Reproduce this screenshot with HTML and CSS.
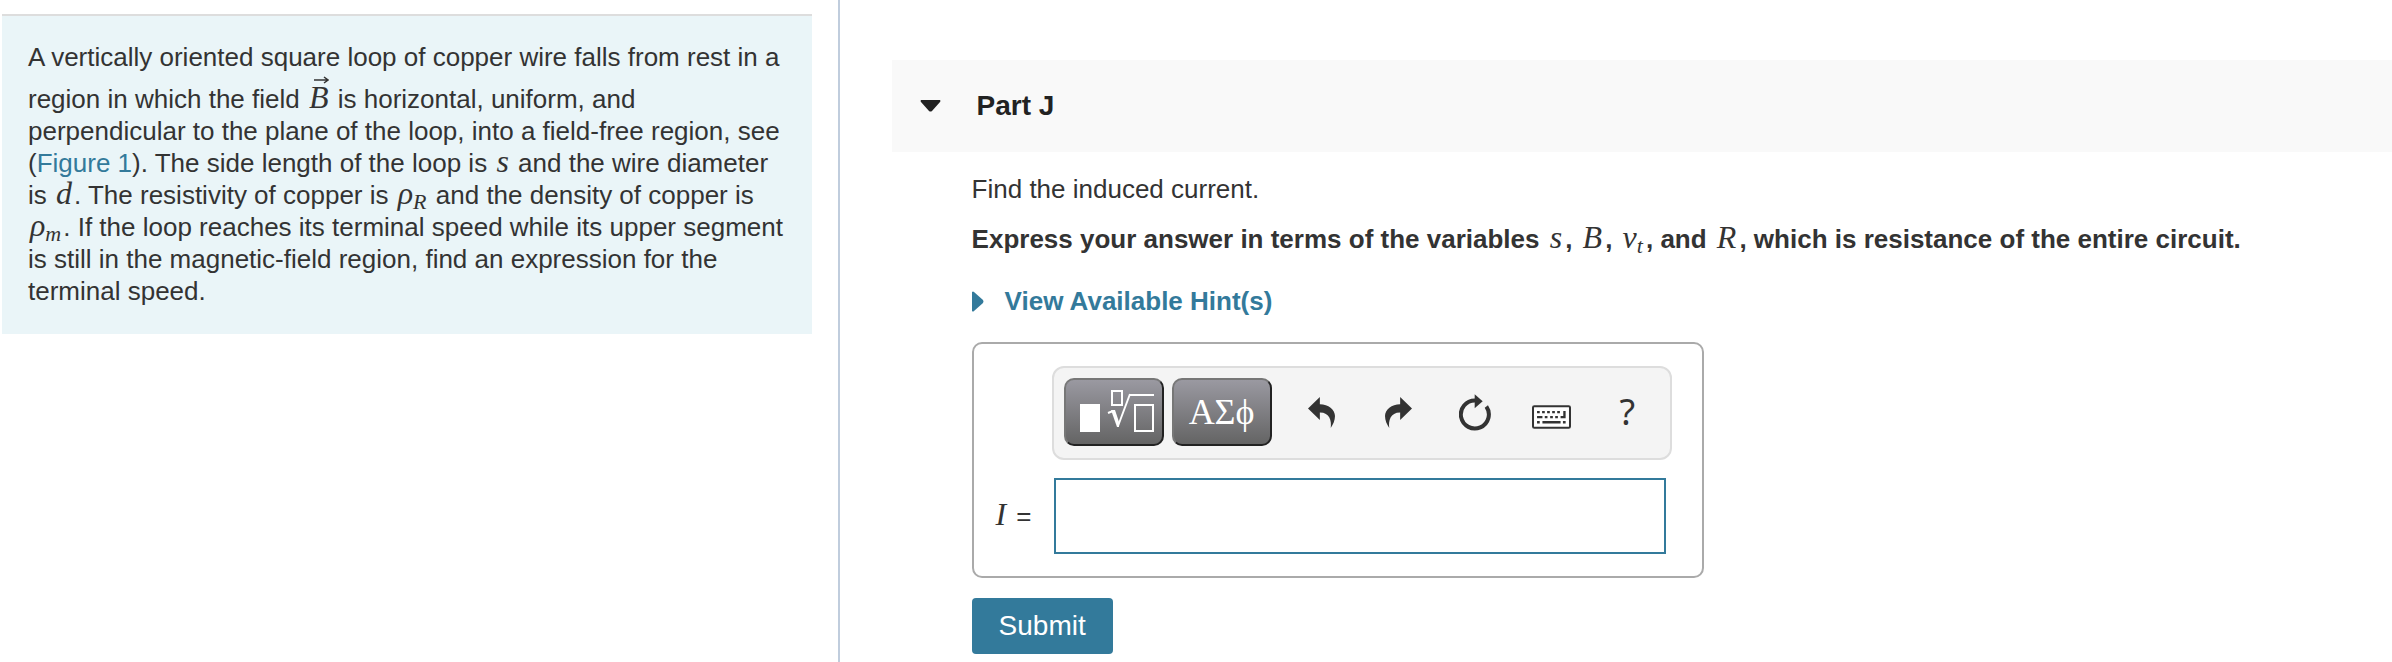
FILE: index.html
```html
<!DOCTYPE html>
<html lang="en">
<head>
    <meta charset="UTF-8">
    <meta name="viewport" content="width=device-width, initial-scale=1.0">
    <title>Part J</title>
    <link rel="stylesheet" href="styles.css">
</head>
<body>

<div class="layout">
    <!-- Problem statement -->
    <aside class="intro-pane">
        <div class="intro">
            A vertically oriented square loop of copper wire falls from rest in a region in which the field
            <span class="math vector">B<svg class="vector-arrow" viewBox="0 0 15 8" width="15" height="8" aria-hidden="true"><path d="M0 4H14M10 1L14 4L10 7" fill="none" stroke="currentColor" stroke-width="1.5"/></svg></span>
            is horizontal, uniform, and perpendicular to the plane of the loop, into a field-free region, see
            (<a href="#figure1">Figure 1</a>). The side length of the loop is <span class="math">s</span>
            and the wire diameter is <span class="math">d</span>. The resistivity of copper is
            <span class="math">ρ<sub>R</sub></span> and the density of copper is
            <span class="math">ρ<sub>m</sub></span>. If the loop reaches its terminal speed while its upper segment
            is still in the magnetic-field region, find an expression for the terminal speed.
        </div>
    </aside>

    <!-- Question part -->
    <main class="part-pane">
        <h2 class="part-header">
            <button type="button" class="part-toggle" aria-expanded="true">
                <svg viewBox="0 0 21 12" width="21" height="12" aria-hidden="true"><path d="M1 0H20Q21 1 20 2L12 11Q10.500 12 9 11L1 2Q0 1 1 0Z" fill="currentColor"/></svg>
                Part J
            </button>
        </h2>

        <div class="part-body">
            <p class="question">Find the induced current.</p>
            <p class="instructions">Express your answer in terms of the variables <span class="math">s</span>, <span class="math">B</span>, <span class="math">v<sub>t</sub></span>, and <span class="math">R</span>, which is resistance of the entire circuit.</p>

            <button type="button" class="hints" aria-expanded="false">
                <svg viewBox="0 0 12 21" width="12" height="21" aria-hidden="true"><path d="M0 1Q1 0 2 1L11 9Q12 10.500 11 12L2 20Q1 21 0 20Z" fill="currentColor"/></svg>
                View Available Hint(s)
            </button>

            <form>
                <div class="answer-box">
                    <div class="toolbar">
                        <button type="button" class="palette" aria-label="Templates">
                            <svg viewBox="0 0 96 64" width="96" height="64">
                                <rect x="14" y="24" width="20" height="28" fill="#fff"/>
                                <g fill="none" stroke="#fff" stroke-width="2">
                                    <rect x="46" y="11" width="10" height="14"/>
                                    <rect x="69" y="25" width="18" height="26"/>
                                    <path d="M42 33L47 31"/>
                                    <path d="M64 15H88"/>
                                    <path d="M52 46L64 14"/>
                                </g>
                                <path d="M45 30L49 30L53 42L53 47H51Z" fill="#fff"/>
                            </svg>
                        </button>
                        <button type="button" class="palette" aria-label="Symbols">ΑΣϕ</button>
                        <div class="tools">
                            <button type="button" class="tool" aria-label="Undo">
                                <svg viewBox="0 0 82 94" width="27" height="31"><path d="M0 35L36 0V22C62 22 82 38 82 58C82 72 76 84 69 94C72 72 66 47 36 47V70Z" fill="currentColor"/></svg>
                            </button>
                            <button type="button" class="tool" aria-label="Redo">
                                <svg viewBox="0 0 82 94" width="27" height="31"><path d="M82 35L46 0V22C20 22 0 38 0 58C0 72 6 84 13 94C10 72 16 47 46 47V70Z" fill="currentColor"/></svg>
                            </button>
                            <button type="button" class="tool" aria-label="Reset">
                                <svg viewBox="0 0 96 110" width="32" height="37"><path d="M82 37A42 42 0 1 1 48 19" fill="none" stroke="currentColor" stroke-width="12"/><path d="M47 0L71 21L47 42Z" fill="currentColor"/></svg>
                            </button>
                            <button type="button" class="tool keyboard" aria-label="Keyboard shortcuts">
                                <svg viewBox="0 0 116 70" width="39" height="24">
                                    <rect x="3" y="3" width="110" height="64" rx="4" fill="#fff" stroke="currentColor" stroke-width="6"/>
                                    <path d="M15 17h8v7h-8zM30 17h8v7h-8zM45 17h8v7h-8zM60 17h8v7h-8zM75 17h8v7h-8zM93 17h7v22H85v-7h8zM15 32h16v7H15zM38 32h8v7h-8zM54 32h8v7h-8zM69 32h8v7h-8zM15 47h8v7h-8zM31 47h54v7H31zM92 47h8v7h-8z" fill="currentColor"/>
                                </svg>
                            </button>
                            <button type="button" class="tool help" aria-label="Help">?</button>
                        </div>
                    </div>
                    <label class="answer-label" for="answer"><span class="math">I</span> =</label>
                    <input type="text" id="answer" class="answer-input">
                </div>
                <button type="submit" class="submit">Submit</button>
            </form>
        </div>
    </main>
</div>

</body>
</html>
```
FILE: styles.css
```css
* {
    box-sizing: border-box;
}
body {
    margin: 0;
    font-family: "Liberation Sans", Arial, sans-serif;
    font-size: 26px;
    line-height: 32px;
    color: #333;
    background-color: #fff;
}
button {
    margin: 0;
    padding: 0;
    border: none;
    background: none;
    font: inherit;
    color: inherit;
    cursor: pointer;
}
svg {
    display: block;
}
a {
    color: #337a9b;
    text-decoration: none;
}
.layout {
    display: flex;
    min-height: 100vh;
}
.intro-pane {
    flex: 0 0 35.1%;
    padding: 14px 26px 0 2px;
    border-right: 2px solid #c0cddd;
}
.intro {
    padding: 25px 20px 27px 26px;
    border-top: 2px solid #ddd;
    background-color: #eaf5f8;
}
.math {
    margin: 0 2px;
    font-family: "Liberation Serif", "Times New Roman", serif;
    font-size: 32px;
    font-style: italic;
    font-weight: normal;
    line-height: 0;
}
.math sub {
    font-size: 22px;
    line-height: 0;
    vertical-align: -5px;
}
.vector {
    display: inline-block;
    position: relative;
    padding-top: 8px;
    line-height: 32px;
}
.vector-arrow {
    position: absolute;
    top: 3px;
    right: 0;
}
.part-pane {
    flex: 1;
    min-width: 0;
    padding: 60px 0 8px 52px;
}
.part-header {
    margin: 0;
    padding: 30px 28px;
    background-color: #f9f9f9;
    color: #222;
    font-size: 28px;
}
.part-toggle {
    display: flex;
    align-items: center;
    gap: 36px;
}
.part-body {
    padding: 21px 24px 0 80px;
}
.question {
    margin: 0 0 18px;
}
.instructions {
    margin: 0 0 30px;
    font-weight: bold;
}
.instructions .math {
    margin: 0 3px;
}
.hints {
    display: flex;
    align-items: center;
    gap: 21px;
    margin-bottom: 25px;
    color: #337a9b;
    font-weight: bold;
}
.answer-box {
    display: grid;
    grid-template-columns: 78px 1fr;
    row-gap: 18px;
    align-items: center;
    max-width: 732px;
    margin-bottom: 20px;
    padding: 22px 30px 22px 0;
    border: 2px solid #aaa;
    border-radius: 10px;
}
.toolbar {
    grid-column: 2;
    display: flex;
    gap: 8px;
    padding: 10px 4px 12px 10px;
    border: 2px solid #ddd;
    border-radius: 12px;
    background-color: #f4f4f4;
}
.palette {
    width: 100px;
    height: 68px;
    border: 2px solid;
    border-color: #777 #222 #222 #777;
    border-radius: 10px;
    background: linear-gradient(#9a99a1, #646464);
    color: #fff;
    font-family: "Liberation Serif", "Times New Roman", serif;
    font-size: 36px;
}
.tools {
    flex: 1;
    display: flex;
    padding-left: 4px;
}
.tool {
    flex: 1;
    display: flex;
    align-items: center;
    justify-content: center;
}
.keyboard {
    padding-top: 10px;
}
.help {
    font-family: "Noto Sans", sans-serif;
    font-size: 36px;
}
.answer-label {
    display: flex;
    align-items: baseline;
    gap: 8px;
    padding-left: 20px;
}
.answer-input {
    height: 76px;
    margin: 0 6px 0 2px;
    padding: 0 12px;
    border: 2px solid #337a9b;
    background-color: #fff;
    font: inherit;
    color: inherit;
}
.submit {
    padding: 12px 27px;
    border-radius: 4px;
    background-color: #337a9b;
    color: #fff;
    font-size: 28px;
}
```
